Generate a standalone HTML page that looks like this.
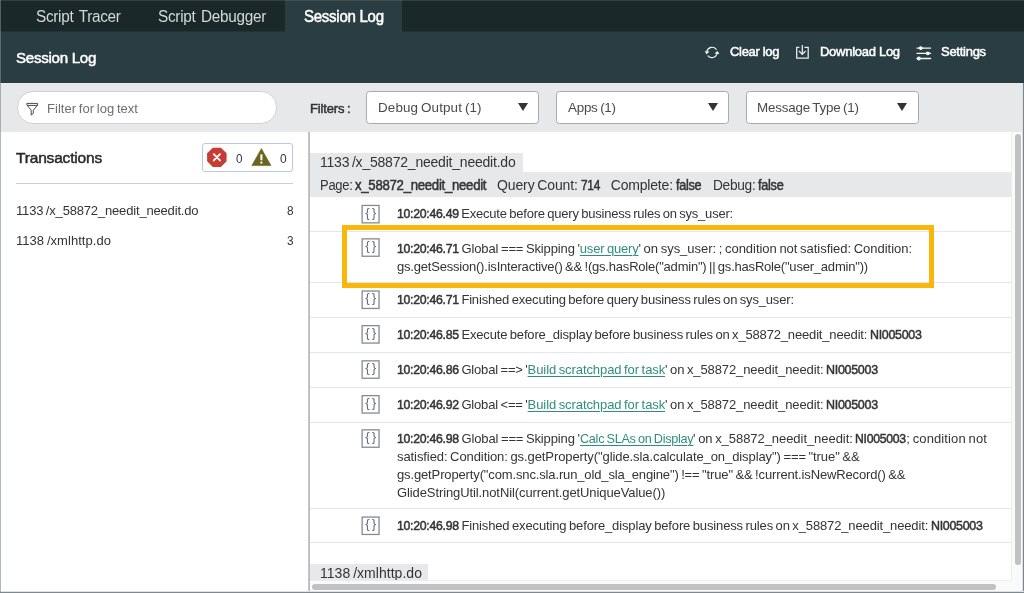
<!DOCTYPE html>
<html lang="en">
<head>
<meta charset="utf-8">
<title>Session Log</title>
<style>
html,body{margin:0;padding:0;}
body{width:1024px;height:593px;overflow:hidden;position:relative;background:#fff;font-family:"Liberation Sans",sans-serif;}
.abs{position:absolute;box-sizing:border-box;}
.t{position:absolute;white-space:pre;margin:0;padding:0;word-spacing:-0.07em;will-change:transform;}
.t b{font-weight:normal;-webkit-text-stroke:0.5px;}
.t a{color:#2f8f7c;text-decoration:underline;text-decoration-thickness:1px;text-underline-offset:2px;}
#tabbar{left:0;top:0;width:1024px;height:31px;background:#1b2829;}
#tabedge{left:0;top:31px;width:1024px;height:1px;background:#223336;}
#tabactive{left:285px;top:0;width:117px;height:32px;background:#2a3d42;}
#header{left:0;top:31px;width:1024px;height:52px;background:#2a3d42;}
#filterbar{left:0;top:83px;width:1024px;height:49px;background:#e6e8ea;}
#search{left:17px;top:91px;width:259.5px;height:33px;background:#fff;border:1px solid #cfd2d4;border-radius:16px;}
.sel{top:91px;width:173.3px;height:33px;background:#fff;border:1px solid #a4acb1;border-radius:3.5px;}
.arrow{position:absolute;width:0;height:0;border-left:5px solid transparent;border-right:5px solid transparent;border-top:8.5px solid #333;top:11.4px;right:10.5px;}
#leftpanel{left:0;top:132px;width:309px;height:461px;background:#fff;}
#divider{left:308px;top:132px;width:2px;height:461px;background:linear-gradient(90deg,#c9cbcd,#b4b6b9);}
#lhr{left:16px;top:183px;width:277px;height:1px;background:#d0d0d0;}
#badge{left:201.7px;top:143.2px;width:91px;height:28.5px;border:1px solid #b9c9d9;border-radius:3px;background:#fff;}
#th1{left:310px;top:153px;width:212.5px;height:19px;background:#e6e8ea;}
#th1b{left:310px;top:171.5px;width:701.5px;height:25.5px;background:#e6e8ea;}
#th2{left:310px;top:564.3px;width:117.7px;height:19px;background:#e6e8ea;}
.sep{left:310px;width:701.5px;height:1px;background:#e4e7e9;}
.ico{left:361.5px;width:18.2px;height:18.7px;padding-top:1.1px;color:#66707b;font-size:13.5px;line-height:14px;text-align:center;letter-spacing:2.2px;text-indent:1.5px;overflow:hidden;will-change:transform;}
#hl{left:342px;top:225px;width:592px;height:63px;border:5px solid #fab60a;}
#vtrack{left:1011px;top:132px;width:11px;height:459px;background:#fafafa;border-left:1px solid #ededed;}
#vthumb{left:1015px;top:134px;width:6px;height:431px;background:#c1c1c1;border-radius:3px;}
#htrack{left:310px;top:580px;width:702px;height:11px;background:#fafafa;border-top:1px solid #ededed;}
#hthumb{left:312px;top:584px;width:684.3px;height:6px;background:#c1c1c1;border-radius:3px;}
#bright{left:1022px;top:83px;width:2px;height:510px;background:linear-gradient(90deg,#dde1e3 50%,#7a878e 50%);}
#bbottom{left:0;top:591px;width:1024px;height:2px;background:linear-gradient(180deg,#dde1e3 50%,#7c8990 50%);}
#bleft{left:0;top:0;width:1px;height:593px;background:rgba(120,135,142,0.6);}
#btop{left:0;top:0;width:1024px;height:1px;background:rgba(255,255,255,0.11);}
</style>
</head>
<body>
<div class="abs" id="tabbar"></div>
<div class="abs" id="tabactive"></div>
<div class="abs" id="header"></div>
<div class="abs" id="tabedge"></div>
<div class="abs" id="tabactive2" style="left:285px;top:31px;width:117px;height:1px;background:#2a3d42"></div>
<div class="abs" id="filterbar"></div>
<div class="abs" id="search"></div>
<div class="abs sel" style="left:366.2px"><i class="arrow"></i></div>
<div class="abs sel" style="left:556.2px"><i class="arrow"></i></div>
<div class="abs sel" style="left:745.6px"><i class="arrow"></i></div>
<div class="abs" id="leftpanel"></div>
<div class="abs" id="lhr"></div>
<div class="abs" id="badge"></div>
<div class="abs" id="th1"></div>
<div class="abs" id="th1b"></div>
<div class="abs" id="th2"></div>
<div class="abs sep" style="top:230.5px"></div>
<div class="abs sep" style="top:281.5px"></div>
<div class="abs sep" style="top:317px"></div>
<div class="abs sep" style="top:352px"></div>
<div class="abs sep" style="top:387px"></div>
<div class="abs sep" style="top:422px"></div>
<div class="abs sep" style="top:508.2px"></div>
<div class="abs sep" style="top:542px"></div>
<div class="abs ico" style="top:204.8px">{}</div>
<div class="abs ico" style="top:238.2px">{}</div>
<div class="abs ico" style="top:290.4px">{}</div>
<div class="abs ico" style="top:325px">{}</div>
<div class="abs ico" style="top:360.2px">{}</div>
<div class="abs ico" style="top:395px">{}</div>
<div class="abs ico" style="top:429.2px">{}</div>
<div class="abs ico" style="top:516.4px">{}</div>
<div class="abs" id="hl"></div>
<svg class="abs" style="left:0;top:0" width="1024" height="593" viewBox="0 0 1024 593">
<!-- script icon frames -->
<g fill="none" stroke="#838b95" stroke-width="1.3"><rect x="362.15" y="205.45" width="16.9" height="17.4"/><rect x="362.15" y="238.85" width="16.9" height="17.4"/><rect x="362.15" y="291.05" width="16.9" height="17.4"/><rect x="362.15" y="325.65" width="16.9" height="17.4"/><rect x="362.15" y="360.85" width="16.9" height="17.4"/><rect x="362.15" y="395.65" width="16.9" height="17.4"/><rect x="362.15" y="429.85" width="16.9" height="17.4"/><rect x="362.15" y="517.05" width="16.9" height="17.4"/></g>
<!-- funnel -->
<g fill="none" stroke="#4a4a4a" stroke-width="1" stroke-linejoin="round">
<path d="M26.9 103.4H37.6V105L33.3 110.2V113.4L31.2 115.1V110.2L26.9 105Z"/>
<path d="M27.2 105.4H37.3"/>
</g>
<!-- refresh -->
<g fill="none" stroke="#f2f4f4" stroke-width="1.15" stroke-linecap="round">
<path d="M706.9 51.2A5.3 5.3 0 0 1 716.3 49.4"/>
<path d="M717 53.8A5.3 5.3 0 0 1 708 55.9"/>
</g>
<path d="M704.7 51.2L709.5 51.6L706.6 54.3Z" fill="#fff"/>
<path d="M719.4 54.1L714.6 53.6L717.4 50.9Z" fill="#fff"/>
<!-- download -->
<g fill="none" stroke="#e6eaeb" stroke-width="1.3">
<path d="M799.4 47.4H796.7V58.2H808.2V47.4H804.4"/>
<path d="M802.3 45.1V54.2"/>
<path d="M799 51L802.3 54.4L805.6 51"/>
</g>
<!-- settings -->
<g stroke="#f4f6f6" stroke-width="1.3" stroke-linecap="round">
<path d="M917 48.1H930.6"/>
<path d="M917 53.3H930.6"/>
<path d="M917 58.5H930.6"/>
</g>
<circle cx="920.8" cy="48.1" r="1.9" fill="#fff"/>
<circle cx="927.8" cy="53.3" r="1.9" fill="#fff"/>
<circle cx="918.9" cy="58.5" r="1.9" fill="#fff"/>
<!-- error octagon -->
<path d="M212.9 147.7H220.9L226.6 153.3V161.3L220.9 166.9H212.9L207.1 161.3V153.3Z" fill="#c83c36"/>
<path d="M213.8 154.2L220 160.4M220 154.2L213.8 160.4" stroke="#fff" stroke-width="1.9" stroke-linecap="round"/>
<!-- warning triangle -->
<path d="M261.4 148.6L271 165.6H251.8Z" fill="#6b651e" stroke="#6b651e" stroke-width="0.6" stroke-linejoin="round"/>
<path d="M261.4 154.4V160.3" stroke="#fff" stroke-width="2.1"/>
<circle cx="261.4" cy="162.7" r="1.15" fill="#fff"/>
</svg>

<div class="t" style="left:35.80px;top:5.96px;font-size:16px;line-height:21px;color:#d3d8d9;word-spacing:1.6px;"><span style="letter-spacing:-0.3px;display:inline-block;transform:scaleX(0.9570);transform-origin:0 50%;margin-right:-3.80px">Script Tracer</span></div>
<div class="t" style="left:158.00px;top:5.96px;font-size:16px;line-height:21px;color:#d3d8d9;word-spacing:1.6px;"><span style="letter-spacing:-0.3px;display:inline-block;transform:scaleX(0.9581);transform-origin:0 50%;margin-right:-4.72px">Script Debugger</span></div>
<div class="t" style="left:303.70px;top:5.96px;font-size:16px;line-height:21px;color:#fff;word-spacing:0px;"><b style="letter-spacing:-0.3px;display:inline-block;transform:scaleX(0.9415);transform-origin:0 50%;margin-right:-4.96px">Session Log</b></div>
<div class="t" style="left:16.00px;top:47.63px;font-size:15.5px;line-height:20px;color:#fff;word-spacing:0px;"><b style="letter-spacing:-0.3px;display:inline-block;transform:scaleX(0.9755);transform-origin:0 50%;margin-right:-2.01px">Session Log</b></div>
<div class="t" style="left:729.70px;top:43.20px;font-size:13px;line-height:17px;color:#fff;word-spacing:0px;"><b style="letter-spacing:-0.315px">Clear log</b></div>
<div class="t" style="left:820.00px;top:43.20px;font-size:13px;line-height:17px;color:#fff;word-spacing:0px;"><b style="letter-spacing:-0.277px">Download Log</b></div>
<div class="t" style="left:941.40px;top:43.20px;font-size:13px;line-height:17px;color:#fff;"><b style="letter-spacing:-0.267px">Settings</b></div>
<div class="t" style="left:47.00px;top:99.50px;font-size:13px;line-height:17px;color:#6b6f73;"><span style="letter-spacing:0.028px">Filter for log text</span></div>
<div class="t" style="left:309.60px;top:99.50px;font-size:13px;line-height:17px;color:#343434;"><b style="letter-spacing:-0.145px">Filters :</b></div>
<div class="t" style="left:377.90px;top:99.36px;font-size:13.4px;line-height:17px;color:#4a4a4a;"><span style="letter-spacing:0.132px">Debug Output (1)</span></div>
<div class="t" style="left:567.90px;top:99.36px;font-size:13.4px;line-height:17px;color:#4a4a4a;"><span style="letter-spacing:-0.234px">Apps (1)</span></div>
<div class="t" style="left:757.30px;top:99.36px;font-size:13.4px;line-height:17px;color:#4a4a4a;"><span style="letter-spacing:-0.210px">Message Type (1)</span></div>
<div class="t" style="left:16.00px;top:148.33px;font-size:15.5px;line-height:20px;color:#2a2a2a;"><b style="letter-spacing:-0.180px">Transactions</b></div>
<div class="t" style="left:235.80px;top:150.00px;font-size:13px;line-height:17px;color:#343434;"><span style="letter-spacing:-0.3px;display:inline-block;transform:scaleX(0.8941);transform-origin:0 50%;margin-right:-0.73px">0</span></div>
<div class="t" style="left:279.90px;top:150.00px;font-size:13px;line-height:17px;color:#343434;"><span style="letter-spacing:-0.3px;display:inline-block;transform:scaleX(0.9229);transform-origin:0 50%;margin-right:-0.53px">0</span></div>
<div class="t" style="left:16.00px;top:202.00px;font-size:13px;line-height:17px;color:#343434;"><span style="letter-spacing:-0.171px">1133 /x_58872_needit_needit.do</span></div>
<div class="t" style="left:286.50px;top:202.00px;font-size:13px;line-height:17px;color:#343434;"><span style="letter-spacing:-0.3px;display:inline-block;transform:scaleX(0.9085);transform-origin:0 50%;margin-right:-0.63px">8</span></div>
<div class="t" style="left:16.00px;top:231.60px;font-size:13px;line-height:17px;color:#343434;"><span style="letter-spacing:0.047px">1138 /xmlhttp.do</span></div>
<div class="t" style="left:286.50px;top:231.60px;font-size:13px;line-height:17px;color:#343434;"><span style="letter-spacing:-0.3px;display:inline-block;transform:scaleX(0.9085);transform-origin:0 50%;margin-right:-0.63px">3</span></div>
<div class="t" style="left:320.00px;top:153.05px;font-size:14px;line-height:18px;color:#343434;"><span style="letter-spacing:-0.215px">1133 /x_58872_needit_needit.do</span></div>
<div class="t" style="left:320.00px;top:175.65px;font-size:14px;line-height:18px;color:#343434;"><span style="letter-spacing:-0.3px;display:inline-block;transform:scaleX(0.9284);transform-origin:0 50%;margin-right:-2.70px">Page: </span><b style="letter-spacing:-0.3px;display:inline-block;transform:scaleX(0.9424);transform-origin:0 50%;margin-right:-8.03px">x_58872_needit_needit</b><span style="letter-spacing:7.828px"> </span><span style="letter-spacing:-0.131px">Query Count: </span><b style="letter-spacing:-0.3px;display:inline-block;transform:scaleX(0.8460);transform-origin:0 50%;margin-right:-3.46px">714</b><span style="letter-spacing:8.328px"> </span><span style="letter-spacing:-0.197px">Complete: </span><b style="letter-spacing:-0.3px;display:inline-block;transform:scaleX(0.8993);transform-origin:0 50%;margin-right:-2.83px">false</b><span style="letter-spacing:8.828px"> </span><span style="letter-spacing:-0.3px;display:inline-block;transform:scaleX(0.9791);transform-origin:0 50%;margin-right:-0.96px">Debug: </span><b style="letter-spacing:-0.3px;display:inline-block;transform:scaleX(0.9082);transform-origin:0 50%;margin-right:-2.58px">false</b></div>
<div class="t" style="left:320.00px;top:563.65px;font-size:14px;line-height:18px;color:#343434;"><span style="letter-spacing:0.031px">1138 /xmlhttp.do</span></div>
<div class="t" style="left:396.90px;top:205.40px;font-size:13px;line-height:17px;color:#343434;"><b style="letter-spacing:-0.3px;display:inline-block;transform:scaleX(0.9459);transform-origin:0 50%;margin-right:-3.54px">10:20:46.49</b><span style="letter-spacing:-0.220px"> Execute before query business rules on sys_user:</span></div>
<div class="t" style="left:396.90px;top:239.50px;font-size:13px;line-height:17px;color:#343434;"><b style="letter-spacing:-0.3px;display:inline-block;transform:scaleX(0.9459);transform-origin:0 50%;margin-right:-3.54px">10:20:46.71</b><span style="letter-spacing:-0.117px"> Global === Skipping '</span><a style="letter-spacing:-0.182px">user query</a><span style="letter-spacing:-0.030px">' on sys_user: ; condition not satisfied: Condition:</span></div>
<div class="t" style="left:396.90px;top:257.60px;font-size:13px;line-height:17px;color:#343434;"><span style="letter-spacing:-0.205px">gs.getSession().isInteractive() &amp;&amp; !(gs.hasRole("admin") || gs.hasRole("user_admin"))</span></div>
<div class="t" style="left:396.90px;top:290.80px;font-size:13px;line-height:17px;color:#343434;"><b style="letter-spacing:-0.3px;display:inline-block;transform:scaleX(0.9459);transform-origin:0 50%;margin-right:-3.54px">10:20:46.71</b><span style="letter-spacing:-0.173px"> Finished executing before query business rules on sys_user:</span></div>
<div class="t" style="left:396.90px;top:326.10px;font-size:13px;line-height:17px;color:#343434;"><b style="letter-spacing:-0.3px;display:inline-block;transform:scaleX(0.9459);transform-origin:0 50%;margin-right:-3.54px">10:20:46.85</b><span style="letter-spacing:-0.164px"> Execute before_display before business rules on x_58872_needit_needit: </span><b style="letter-spacing:-0.3px;display:inline-block;transform:scaleX(0.9548);transform-origin:0 50%;margin-right:-2.44px">NI005003</b></div>
<div class="t" style="left:396.90px;top:361.30px;font-size:13px;line-height:17px;color:#343434;"><b style="letter-spacing:-0.3px;display:inline-block;transform:scaleX(0.9459);transform-origin:0 50%;margin-right:-3.54px">10:20:46.86</b><span style="letter-spacing:-0.169px"> Global ==&gt; '</span><a style="letter-spacing:-0.085px">Build scratchpad for task</a><span style="letter-spacing:-0.102px">' on x_58872_needit_needit: </span><b style="letter-spacing:-0.3px;display:inline-block;transform:scaleX(0.9594);transform-origin:0 50%;margin-right:-2.19px">NI005003</b></div>
<div class="t" style="left:396.90px;top:395.90px;font-size:13px;line-height:17px;color:#343434;"><b style="letter-spacing:-0.3px;display:inline-block;transform:scaleX(0.9459);transform-origin:0 50%;margin-right:-3.54px">10:20:46.92</b><span style="letter-spacing:-0.169px"> Global &lt;== '</span><a style="letter-spacing:-0.085px">Build scratchpad for task</a><span style="letter-spacing:-0.102px">' on x_58872_needit_needit: </span><b style="letter-spacing:-0.3px;display:inline-block;transform:scaleX(0.9594);transform-origin:0 50%;margin-right:-2.19px">NI005003</b></div>
<div class="t" style="left:396.90px;top:429.50px;font-size:13px;line-height:17px;color:#343434;"><b style="letter-spacing:-0.3px;display:inline-block;transform:scaleX(0.9459);transform-origin:0 50%;margin-right:-3.54px">10:20:46.98</b><span style="letter-spacing:-0.117px"> Global === Skipping '</span><a style="letter-spacing:-0.3px;display:inline-block;transform:scaleX(0.9744);transform-origin:0 50%;margin-right:-2.98px">Calc SLAs on Display</a><span style="letter-spacing:-0.055px">' on x_58872_needit_needit: </span><b style="letter-spacing:-0.3px;display:inline-block;transform:scaleX(0.9391);transform-origin:0 50%;margin-right:-3.29px">NI005003</b><span style="letter-spacing:0.117px">; condition not</span></div>
<div class="t" style="left:396.90px;top:447.60px;font-size:13px;line-height:17px;color:#343434;"><span style="letter-spacing:-0.084px">satisfied: Condition: gs.getProperty("glide.sla.calculate_on_display") === "true" &amp;&amp;</span></div>
<div class="t" style="left:396.90px;top:465.80px;font-size:13px;line-height:17px;color:#343434;"><span style="letter-spacing:-0.137px">gs.getProperty("com.snc.sla.run_old_sla_engine") !== "true" &amp;&amp; !current.isNewRecord() &amp;&amp;</span></div>
<div class="t" style="left:396.90px;top:484.00px;font-size:13px;line-height:17px;color:#343434;"><span style="letter-spacing:-0.099px">GlideStringUtil.notNil(current.getUniqueValue())</span></div>
<div class="t" style="left:396.90px;top:517.30px;font-size:13px;line-height:17px;color:#343434;"><b style="letter-spacing:-0.3px;display:inline-block;transform:scaleX(0.9459);transform-origin:0 50%;margin-right:-3.54px">10:20:46.98</b><span style="letter-spacing:-0.138px"> Finished executing before_display before business rules on x_58872_needit_needit: </span><b style="letter-spacing:-0.3px;display:inline-block;transform:scaleX(0.9557);transform-origin:0 50%;margin-right:-2.39px">NI005003</b></div>
<div class="abs" id="vtrack"></div>
<div class="abs" id="vthumb"></div>
<div class="abs" id="htrack"></div>
<div class="abs" id="hthumb"></div>
<div class="abs" id="divider"></div>
<div class="abs" id="bright"></div>
<div class="abs" id="bbottom"></div>
<div class="abs" id="bleft"></div>
<div class="abs" id="btop"></div>
</body>
</html>
